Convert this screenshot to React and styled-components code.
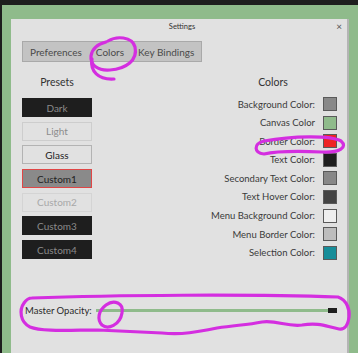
import styled, { createGlobalStyle } from "styled-components";

const GlobalStyle = createGlobalStyle`
  html, body {
    margin: 0;
    padding: 0;
    background: #1e1e1e;
  }
  body {
    font-family: Lato, "Open Sans", sans-serif;
  }
`;

const Screen = styled.div`
  position: relative;
  width: 358px;
  height: 353px;
  box-sizing: border-box;
  border-top: 5px solid #1e1e1e;
  border-left: 2px solid #1e1e1e;
  background: #8fbb8b;
  overflow: hidden;
  padding: 14px 9px 0 9px;
`;

const Panel = styled.div`
  height: 100%;
  box-sizing: border-box;
  background: #e1e1e1;
  border-right: 2px solid #b4b4b4;
  padding: 0 10px 0 11px;
  display: flex;
  flex-direction: column;
`;

const TitleBar = styled.div`
  height: 14px;
  display: grid;
  grid-template-columns: 1fr auto 1fr;
  align-items: center;
  margin-right: -5px;
`;

const Title = styled.div`
  grid-column: 2;
  font-size: 7.5px;
  color: #333;
`;

const Close = styled.div`
  grid-column: 3;
  justify-self: end;
  font-size: 10px;
  line-height: 1;
  color: #555;
`;

const Tabs = styled.div`
  margin-top: 8px;
  align-self: flex-start;
  display: flex;
  height: 21px;
  box-sizing: border-box;
  background: #c3c3c3;
  border: 1px solid #a9a9a9;
`;

const Tab = styled.div`
  display: flex;
  align-items: center;
  padding: 0 7px;
  font-size: 10px;
  color: #4a4a4a;
`;

const Columns = styled.div`
  margin-top: 13px;
  display: flex;
  justify-content: space-between;
`;

const Column = styled.div`
  width: ${(p) => p.$width}px;
  flex-shrink: 0;
  display: flex;
  flex-direction: column;
`;

const Heading = styled.div`
  height: 14px;
  line-height: 14px;
  text-align: center;
  font-size: 10.5px;
  color: #333;
  margin-bottom: 9px;
`;

const PresetList = styled.div`
  display: flex;
  flex-direction: column;
  gap: 4.7px;
`;

const Preset = styled.div`
  height: 19px;
  box-sizing: border-box;
  display: flex;
  align-items: center;
  justify-content: center;
  font-size: 10px;
  background: ${(p) => p.$bg};
  color: ${(p) => p.$fg};
  border: 1px solid ${(p) => p.$border};
`;

const ColorList = styled.div`
  display: flex;
  flex-direction: column;
  gap: 4.6px;
  margin-top: -1px;
`;

const ColorRow = styled.div`
  height: 14px;
  display: flex;
  align-items: center;
  justify-content: flex-end;
  gap: 8px;
`;

const ColorLabel = styled.span`
  font-size: 9.5px;
  color: #3a3a3a;
  white-space: nowrap;
`;

const Swatch = styled.div`
  width: 14px;
  height: 14px;
  flex-shrink: 0;
  box-sizing: border-box;
  border: 1px solid #5a5a5a;
  background: ${(p) => p.$color};
`;

const OpacityRow = styled.div`
  margin-top: 44px;
  height: 14px;
  display: flex;
  align-items: center;
  padding-left: 3px;
  gap: 4px;
`;

const OpacityLabel = styled.span`
  font-size: 9.5px;
  color: #2a2a2a;
`;

const Track = styled.div`
  flex: 1;
  height: 3px;
  background: #8fbb8b;
  display: flex;
  align-items: center;
  justify-content: flex-end;
`;

const Thumb = styled.div`
  width: 9px;
  height: 5px;
  background: #1e1e1e;
`;

const Marks = styled.svg`
  position: absolute;
  left: 0;
  top: 0;
  pointer-events: none;
`;

const presets = [
  { name: "Dark", bg: "#1e1e1e", fg: "#8a8a8a", border: "#1e1e1e" },
  { name: "Light", bg: "#e1e1e1", fg: "#8c8c8c", border: "#cdcdcd" },
  { name: "Glass", bg: "#e1e1e1", fg: "#222", border: "#b3b3b3" },
  { name: "Custom1", bg: "#8a8a8a", fg: "#222", border: "#e04646" },
  { name: "Custom2", bg: "#e1e1e1", fg: "#a8a8a8", border: "#d4d4d4" },
  { name: "Custom3", bg: "#1e1e1e", fg: "#8a8a8a", border: "#1e1e1e" },
  { name: "Custom4", bg: "#1e1e1e", fg: "#8a8a8a", border: "#1e1e1e" },
];

const colors = [
  ["Background Color:", "#888888"],
  ["Canvas Color", "#8fbb8b"],
  ["Border Color:", "#ee2424"],
  ["Text Color:", "#1e1e1e"],
  ["Secondary Text Color:", "#888888"],
  ["Text Hover Color:", "#444444"],
  ["Menu Background Color:", "#efefef"],
  ["Menu Border Color:", "#bdbdbd"],
  ["Selection Color:", "#178d99"],
];

const ink = "#d42ee0";

const App = () => {
  return (
    <>
      <GlobalStyle />
      <Screen>
        <Panel>
          <TitleBar>
            <Title>Settings</Title>
            <Close>×</Close>
          </TitleBar>
          <Tabs>
            <Tab>Preferences</Tab>
            <Tab>Colors</Tab>
            <Tab>Key Bindings</Tab>
          </Tabs>
          <Columns>
            <Column $width={70}>
              <Heading>Presets</Heading>
              <PresetList>
                {presets.map((p) => (
                  <Preset key={p.name} $bg={p.bg} $fg={p.fg} $border={p.border}>
                    {p.name}
                  </Preset>
                ))}
              </PresetList>
            </Column>
            <Column $width={128}>
              <Heading>Colors</Heading>
              <ColorList>
                {colors.map(([label, c]) => (
                  <ColorRow key={label}>
                    <ColorLabel>{label}</ColorLabel>
                    <Swatch $color={c} />
                  </ColorRow>
                ))}
              </ColorList>
            </Column>
          </Columns>
          <OpacityRow>
            <OpacityLabel>Master Opacity:</OpacityLabel>
            <Track>
              <Thumb />
            </Track>
          </OpacityRow>
        </Panel>
        <Marks width="358" height="353" viewBox="0 0 358 353">
          <g fill="none" stroke={ink} strokeWidth="3.2" strokeLinecap="round" strokeLinejoin="round">
            <path d="M 106 36 C 114 31, 130 31, 133 42 C 136 55, 124 64, 108 65 C 96 66, 88 60, 89 51 C 90 44, 96 39, 104 37" />
            <path d="M 90 54 C 88 66, 96 75, 112 74" />
            <path d="M 262 136 C 290 131, 328 130, 339 136 C 346 142, 338 148, 320 147 C 295 146, 275 146, 262 149 C 252 148, 251 139, 262 136" />
            <path d="M 30 293 C 110 290, 250 289, 336 292 C 345 295, 348 305, 347 312 C 346 320, 343 325, 337 324 C 325 322, 318 317, 300 320 C 285 322, 275 315, 260 317 C 245 320, 235 320, 215 323 C 195 327, 180 330, 160 328 C 140 327, 120 326, 96 325 C 70 325, 40 327, 28 322 C 18 317, 17 305, 22 298 C 24 295, 27 293, 30 293" />
            <path d="M 104 300 C 112 294, 122 298, 120 308 C 118 320, 106 325, 100 320 C 95 315, 96 306, 104 300" />
          </g>
        </Marks>
      </Screen>
    </>
  );
};

export default App;
